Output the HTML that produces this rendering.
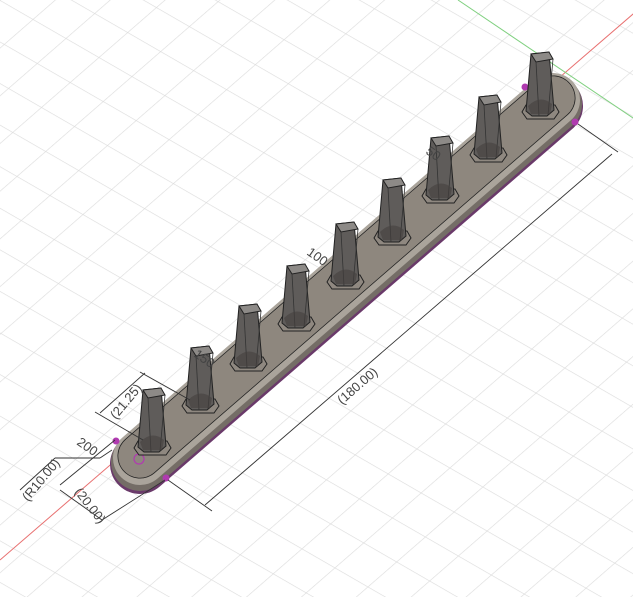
<!DOCTYPE html>
<html><head><style>
html,body{margin:0;padding:0;background:#fff;}
svg{display:block;font-family:"Liberation Sans",sans-serif;}
</style></head><body>
<svg width="633" height="597" viewBox="0 0 633 597" xmlns="http://www.w3.org/2000/svg">
<defs>
<pattern id="g1" width="36" height="36" patternUnits="userSpaceOnUse" patternTransform="rotate(30)">
<line x1="0" y1="0" x2="36" y2="0" stroke="#dcdcdc" stroke-width="1.2"/></pattern>
<pattern id="g2" width="36" height="36" patternUnits="userSpaceOnUse" patternTransform="rotate(-41)">
<line x1="0" y1="0" x2="36" y2="0" stroke="#dcdcdc" stroke-width="1.2"/></pattern>
<g id="post">
<path d="M-18,0 L-14,-7 L15,-7 L19,0 L14,7 L-13,7 Z" fill="#8f8880" stroke="#222" stroke-width="1"/>
<path d="M-14,-1 L-9,-58 L9,-60 L14,-2 L7,4 L-8,4 Z" fill="#5f5c5a" stroke="#222" stroke-width="1"/>
<path d="M-9,-58 L9,-60 L13,-53 L-4,-50 Z" fill="#8d8a87" stroke="#222" stroke-width="1"/>
<line x1="-4" y1="-50" x2="-1" y2="4" stroke="#333" stroke-width="0.8"/>
<line x1="13" y1="-53" x2="8" y2="3" stroke="#333" stroke-width="0.8"/>
<path d="M-12,-6 Q0,-18 12,-8 L10,2 L-9,2 Z" fill="#44403e" opacity="0.6"/>
</g>
</defs>
<rect width="633" height="597" fill="#fff"/>
<rect width="633" height="597" fill="url(#g1)"/>
<rect width="633" height="597" fill="url(#g2)"/>
<line x1="0" y1="560" x2="640" y2="8" stroke="#e87070" stroke-width="1"/>
<line x1="458" y1="0" x2="633" y2="118" stroke="#80d080" stroke-width="1"/>
<!-- bar -->
<line x1="140" y1="464" x2="553" y2="106" stroke="#6a3a6a" stroke-width="60" stroke-linecap="round"/>
<line x1="140" y1="462" x2="553" y2="104" stroke="#746d66" stroke-width="58" stroke-linecap="round"/>
<line x1="140" y1="458" x2="553" y2="100" stroke="#aaa49b" stroke-width="54" stroke-linecap="round"/>
<line x1="140" y1="456" x2="553" y2="98" stroke="#222" stroke-width="45" stroke-linecap="round"/>
<line x1="140" y1="456" x2="553" y2="98" stroke="#8e877e" stroke-width="43.5" stroke-linecap="round"/>
<g fill="#b03ab0">
<circle cx="116" cy="441" r="3.5"/><circle cx="166" cy="478" r="3.5"/>
<circle cx="575" cy="122" r="3.5"/><circle cx="525" cy="87" r="3.5"/>
</g>
<circle cx="139" cy="459" r="5" fill="none" stroke="#b03ab0" stroke-width="1.2"/>
<!-- posts -->
<use href="#post" x="152" y="448"/>
<use href="#post" x="200" y="406"/>
<use href="#post" x="248" y="364"/>
<use href="#post" x="296" y="324"/>
<use href="#post" x="345" y="282"/>
<use href="#post" x="392" y="238"/>
<use href="#post" x="440" y="196"/>
<use href="#post" x="488" y="155"/>
<use href="#post" x="540" y="112"/>
<!-- dimensions -->
<g stroke="#333" stroke-width="0.9" fill="none">
<line x1="205" y1="505" x2="612" y2="154"/>
<line x1="168" y1="480" x2="212" y2="511"/>
<line x1="578" y1="124" x2="618" y2="152"/>
<line x1="100" y1="413" x2="145" y2="373"/>
<line x1="95" y1="412" x2="143" y2="440"/>
<line x1="140" y1="372" x2="190" y2="400"/>
<line x1="60" y1="485" x2="115" y2="440"/>
<line x1="60" y1="490" x2="102" y2="520"/>
<line x1="102" y1="520" x2="165" y2="480"/>
<line x1="55" y1="458" x2="100" y2="458"/>
<line x1="20" y1="490" x2="55" y2="458"/>
<line x1="100" y1="458" x2="112" y2="450"/>
</g>
<g font-size="13" fill="#444">
<text transform="translate(342,405) rotate(-41)">(180.00)</text>
<text transform="translate(116,420) rotate(-50)">(21.25)</text>
<text transform="translate(28,502) rotate(-50)">(R10.00)</text>
<text transform="translate(74,492) rotate(52)">(20.00)</text>
<text transform="translate(76,444) rotate(35)">200</text>
<text transform="translate(193,356) rotate(35)">150</text>
<text transform="translate(306,254) rotate(35)">100</text>
<text transform="translate(425,153) rotate(35)">50</text>
</g>
</svg>
</body></html>
